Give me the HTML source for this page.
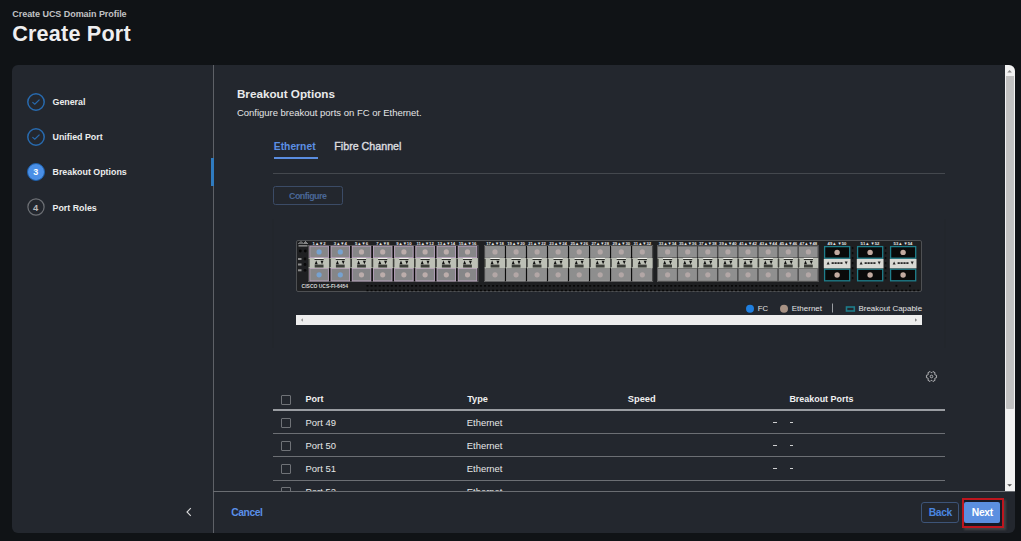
<!DOCTYPE html>
<html><head><meta charset="utf-8"><style>
html,body{margin:0;padding:0;width:1021px;height:541px;overflow:hidden;background:#101316;font-family:"Liberation Sans", sans-serif}
.t{position:absolute;white-space:nowrap}
.r{position:absolute}
</style></head><body>
<div class="t" style="left:12.30px;top:9.88px;font-size:9px;line-height:9px;font-weight:700;color:#c2c3c5;letter-spacing:-0.05px">Create UCS Domain Profile</div><div class="t" style="left:12.20px;top:22.82px;font-size:21.6px;line-height:21.6px;font-weight:700;color:#eeeeef;letter-spacing:0.2px">Create Port</div><div class="r" style="left:12px;top:65px;width:1003px;height:468px;background:#23272e;border-radius:6px"></div><div class="r" style="left:213px;top:65px;width:1px;height:468px;background:#5e6167"></div><div class="r" style="left:211px;top:158px;width:3px;height:28px;background:#2f7bc0"></div><svg class="r" style="left:26px;top:91.5px" width="20" height="20" viewBox="0 0 20 20"><circle cx="10" cy="10" r="8.2" fill="none" stroke="#286aae" stroke-width="1.5"/><path d="M6.4 10.1 L8.8 12.2 L13.5 7.6" fill="none" stroke="#286aae" stroke-width="1.2"/></svg><div class="t" style="left:52.50px;top:98.01px;font-size:8.85px;line-height:8.85px;font-weight:700;color:#eceded;">General</div><svg class="r" style="left:26px;top:126.8px" width="20" height="20" viewBox="0 0 20 20"><circle cx="10" cy="10" r="8.2" fill="none" stroke="#286aae" stroke-width="1.5"/><path d="M6.4 10.1 L8.8 12.2 L13.5 7.6" fill="none" stroke="#286aae" stroke-width="1.2"/></svg><div class="t" style="left:52.50px;top:133.31px;font-size:8.85px;line-height:8.85px;font-weight:700;color:#eceded;">Unified Port</div><svg class="r" style="left:26px;top:161.8px" width="20" height="20" viewBox="0 0 20 20"><circle cx="10" cy="10" r="8.5" fill="#4a8fe6" stroke="#1d5ea8" stroke-width="1"/></svg><div class="t" style="left:33.20px;top:168.18px;font-size:9px;line-height:9px;font-weight:700;color:#ffffff;">3</div><div class="t" style="left:52.50px;top:168.31px;font-size:8.85px;line-height:8.85px;font-weight:700;color:#eceded;">Breakout Options</div><svg class="r" style="left:26px;top:197.3px" width="20" height="20" viewBox="0 0 20 20"><circle cx="10" cy="10" r="8.1" fill="none" stroke="#6d7075" stroke-width="1.2"/></svg><div class="t" style="left:33.00px;top:203.14px;font-size:9.4px;line-height:9.4px;font-weight:700;color:#b9babc;">4</div><div class="t" style="left:52.50px;top:203.81px;font-size:8.85px;line-height:8.85px;font-weight:700;color:#eceded;">Port Roles</div><svg class="r" style="left:184px;top:506px" width="10" height="12" viewBox="0 0 10 12"><path d="M6.8 2.2 L3 6 L6.8 9.8" fill="none" stroke="#d8d9da" stroke-width="1.1"/></svg><div class="t" style="left:236.90px;top:87.70px;font-size:11.7px;line-height:11.7px;font-weight:700;color:#e9eaeb;">Breakout Options</div><div class="t" style="left:236.90px;top:108.38px;font-size:9.48px;line-height:9.48px;font-weight:400;color:#e4e5e6;">Configure breakout ports on FC or Ethernet.</div><div class="t" style="left:273.80px;top:142.48px;font-size:10.3px;line-height:10.3px;font-weight:700;color:#5c8fe4;">Ethernet</div><div class="r" style="left:273.5px;top:157px;width:44px;height:2px;background:#5a8de0"></div><div class="t" style="left:334.30px;top:141.34px;font-size:10.7px;line-height:10.7px;font-weight:400;color:#dedfe0;-webkit-text-stroke:0.35px #dedfe0">Fibre Channel</div><div class="r" style="left:273px;top:173px;width:672px;height:1px;background:#44484e"></div><div class="r" style="left:273px;top:186px;width:70px;height:19px;box-sizing:border-box;border:1px solid #3b4b66;border-radius:2.5px"></div><div class="t" style="left:289.00px;top:191.77px;font-size:8.9px;line-height:8.9px;font-weight:700;color:#4a6797;letter-spacing:-0.5px">Configure</div><svg class="r" style="left:924.8px;top:369.7px" width="13" height="13" viewBox="0 0 13 13"><g fill="none" stroke="#b4b5b7" stroke-width="0.95" stroke-linejoin="round"><path d="M10.06 4.91 L11.55 5.26 L11.55 7.74 L10.06 8.09 L9.66 8.79 L10.10 10.26 L7.96 11.49 L6.90 10.38 L6.10 10.38 L5.04 11.49 L2.90 10.26 L3.34 8.79 L2.94 8.09 L1.45 7.74 L1.45 5.26 L2.94 4.91 L3.34 4.21 L2.90 2.74 L5.04 1.51 L6.10 2.62 L6.90 2.62 L7.96 1.51 L10.10 2.74 L9.66 4.21 Z"/><circle cx="6.5" cy="6.5" r="1.3"/></g></svg><div class="r" style="left:281px;top:395px;width:10px;height:10px;box-sizing:border-box;border:1px solid #6f7277;border-radius:1px"></div><div class="t" style="left:305.50px;top:394.88px;font-size:9.0px;line-height:9.0px;font-weight:700;color:#f0f0f1;">Port</div><div class="t" style="left:467.20px;top:394.71px;font-size:9.2px;line-height:9.2px;font-weight:700;color:#f0f0f1;">Type</div><div class="t" style="left:627.80px;top:394.63px;font-size:9.3px;line-height:9.3px;font-weight:700;color:#f0f0f1;">Speed</div><div class="t" style="left:789.40px;top:394.94px;font-size:8.93px;line-height:8.93px;font-weight:700;color:#f0f0f1;">Breakout Ports</div><div class="r" style="left:273px;top:409px;width:672px;height:2px;background:#9a9da2"></div><div class="r" style="left:213px;top:65px;width:791px;height:426px;overflow:hidden"><div class="r" style="left:68px;top:353px;width:10px;height:10px;box-sizing:border-box;border:1px solid #6f7277;border-radius:1px"></div><div class="t" style="left:92.50px;top:352.70px;font-size:9.45px;line-height:9.45px;font-weight:400;color:#e6e7e8;">Port 49</div><div class="t" style="left:253.80px;top:352.73px;font-size:9.42px;line-height:9.42px;font-weight:400;color:#e6e7e8;">Ethernet</div><div class="r" style="left:560.4px;top:357px;width:3.2px;height:1.2px;background:#cfd0d1"></div><div class="r" style="left:576.9px;top:357px;width:3.2px;height:1.2px;background:#cfd0d1"></div><div class="r" style="left:60px;top:368px;width:672px;height:1px;background:#6c6f74"></div><div class="r" style="left:68px;top:376px;width:10px;height:10px;box-sizing:border-box;border:1px solid #6f7277;border-radius:1px"></div><div class="t" style="left:92.50px;top:375.90px;font-size:9.45px;line-height:9.45px;font-weight:400;color:#e6e7e8;">Port 50</div><div class="t" style="left:253.80px;top:375.93px;font-size:9.42px;line-height:9.42px;font-weight:400;color:#e6e7e8;">Ethernet</div><div class="r" style="left:560.4px;top:380px;width:3.2px;height:1.2px;background:#cfd0d1"></div><div class="r" style="left:576.9px;top:380px;width:3.2px;height:1.2px;background:#cfd0d1"></div><div class="r" style="left:60px;top:391px;width:672px;height:1px;background:#6c6f74"></div><div class="r" style="left:68px;top:399px;width:10px;height:10px;box-sizing:border-box;border:1px solid #6f7277;border-radius:1px"></div><div class="t" style="left:92.50px;top:399.20px;font-size:9.45px;line-height:9.45px;font-weight:400;color:#e6e7e8;">Port 51</div><div class="t" style="left:253.80px;top:399.23px;font-size:9.42px;line-height:9.42px;font-weight:400;color:#e6e7e8;">Ethernet</div><div class="r" style="left:560.4px;top:403px;width:3.2px;height:1.2px;background:#cfd0d1"></div><div class="r" style="left:576.9px;top:403px;width:3.2px;height:1.2px;background:#cfd0d1"></div><div class="r" style="left:60px;top:415px;width:672px;height:1px;background:#6c6f74"></div><div class="r" style="left:68px;top:422px;width:10px;height:10px;box-sizing:border-box;border:1px solid #6f7277;border-radius:1px"></div><div class="t" style="left:92.50px;top:422.10px;font-size:9.45px;line-height:9.45px;font-weight:400;color:#e6e7e8;">Port 52</div><div class="t" style="left:253.80px;top:422.13px;font-size:9.42px;line-height:9.42px;font-weight:400;color:#e6e7e8;">Ethernet</div><div class="r" style="left:560.4px;top:426px;width:3.2px;height:1.2px;background:#cfd0d1"></div><div class="r" style="left:576.9px;top:426px;width:3.2px;height:1.2px;background:#cfd0d1"></div><div class="r" style="left:60px;top:438px;width:672px;height:1px;background:#6c6f74"></div></div><div class="r" style="left:213px;top:491px;width:802px;height:1px;background:#6a6d72"></div><div class="t" style="left:231.30px;top:507.58px;font-size:10.3px;line-height:10.3px;font-weight:700;color:#5b8fe8;letter-spacing:-0.42px">Cancel</div><div class="r" style="left:921px;top:502px;width:38px;height:21px;box-sizing:border-box;border:1px solid #3d5478;border-radius:3px"></div><div class="t" style="left:928.80px;top:507.58px;font-size:10.3px;line-height:10.3px;font-weight:700;color:#4a86e0;letter-spacing:-0.4px">Back</div><div class="r" style="left:962px;top:498px;width:42px;height:30px;box-sizing:border-box;border:2px solid #bd161e;background:#161a26;box-shadow:1.5px 1.5px 2px rgba(70,70,72,0.9)"></div><div class="r" style="left:964px;top:502px;width:36px;height:21px;background:#5b8fe0;border-radius:2px"></div><div class="t" style="left:971.80px;top:507.58px;font-size:10.3px;line-height:10.3px;font-weight:700;color:#ffffff;letter-spacing:-0.3px">Next</div><div class="r" style="left:1004.6px;top:65px;width:10.4px;height:426px;background:#f1f1f1;border-top-right-radius:6px"></div><div class="r" style="left:1006px;top:76px;width:7.6px;height:332.6px;background:#c1c1c1;border-radius:0 0 1px 1px"></div><svg class="r" style="left:1004px;top:65px" width="11" height="426" viewBox="0 0 11 426"><path d="M3.3 7.4 L5.6 5.1 L7.9 7.4 Z" fill="#8a8a8a"/><path d="M3.2 419.2 L5.6 421.5 L8 419.2 Z" fill="#4a4a4a"/></svg><div class="r" style="left:272px;top:219px;width:2px;height:129px;background:#22262c"></div><div class="r" style="left:944px;top:219px;width:2px;height:129px;background:#22262c"></div><svg class="r" style="left:290px;top:236px" width="640" height="60" viewBox="290 236 640 60"><rect x="296.5" y="240.5" width="625" height="51" rx="1.5" fill="#1f2022" stroke="#4e5053" stroke-width="1"/><rect x="298.5" y="243" width="0.6" height="1" fill="#c8c8c8"/><rect x="299.6" y="242" width="0.6" height="2" fill="#c8c8c8"/><rect x="300.7" y="241" width="0.6" height="3" fill="#c8c8c8"/><rect x="301.8" y="242" width="0.6" height="2" fill="#c8c8c8"/><rect x="302.9" y="243" width="0.6" height="1" fill="#c8c8c8"/><rect x="304.0" y="242" width="0.6" height="2" fill="#c8c8c8"/><rect x="305.1" y="241" width="0.6" height="3" fill="#c8c8c8"/><rect x="306.2" y="242" width="0.6" height="2" fill="#c8c8c8"/><rect x="307.3" y="243" width="0.6" height="1" fill="#c8c8c8"/><rect x="298.5" y="245.2" width="9" height="1.3" fill="#9a9a9a"/><circle cx="300.3" cy="251" r="1.4" fill="#050505"/><circle cx="305.3" cy="251" r="1.4" fill="#050505"/><rect x="298" y="258" width="3.5" height="2" fill="#8c8c8c"/><circle cx="305" cy="259" r="1.4" fill="#0a0a0a"/><rect x="298" y="263.5" width="3.5" height="2" fill="#8c8c8c"/><circle cx="305" cy="264.5" r="1.4" fill="#0a0a0a"/><rect x="298" y="269.3" width="3.5" height="2" fill="#8c8c8c"/><circle cx="305" cy="270.3" r="1.4" fill="#0a0a0a"/><text x="301.6" y="288.3" font-family="Liberation Sans" font-size="5.2" font-weight="700" fill="#d8d8d8" textLength="46.5" lengthAdjust="spacingAndGlyphs">CISCO UCS-FI-6454</text><rect x="366.5" y="285.0" width="2" height="1.6" fill="#070707"/><rect x="366.5" y="289.7" width="2" height="1.6" fill="#070707"/><rect x="370.6" y="285.0" width="2" height="1.6" fill="#070707"/><rect x="370.6" y="289.7" width="2" height="1.6" fill="#070707"/><rect x="374.6" y="285.0" width="2" height="1.6" fill="#070707"/><rect x="374.6" y="289.7" width="2" height="1.6" fill="#070707"/><rect x="378.7" y="285.0" width="2" height="1.6" fill="#070707"/><rect x="378.7" y="289.7" width="2" height="1.6" fill="#070707"/><rect x="382.7" y="285.0" width="2" height="1.6" fill="#070707"/><rect x="382.7" y="289.7" width="2" height="1.6" fill="#070707"/><rect x="386.8" y="285.0" width="2" height="1.6" fill="#070707"/><rect x="386.8" y="289.7" width="2" height="1.6" fill="#070707"/><rect x="390.8" y="285.0" width="2" height="1.6" fill="#070707"/><rect x="390.8" y="289.7" width="2" height="1.6" fill="#070707"/><rect x="394.9" y="285.0" width="2" height="1.6" fill="#070707"/><rect x="394.9" y="289.7" width="2" height="1.6" fill="#070707"/><rect x="398.9" y="285.0" width="2" height="1.6" fill="#070707"/><rect x="398.9" y="289.7" width="2" height="1.6" fill="#070707"/><rect x="403.0" y="285.0" width="2" height="1.6" fill="#070707"/><rect x="403.0" y="289.7" width="2" height="1.6" fill="#070707"/><rect x="407.0" y="285.0" width="2" height="1.6" fill="#070707"/><rect x="407.0" y="289.7" width="2" height="1.6" fill="#070707"/><rect x="411.1" y="285.0" width="2" height="1.6" fill="#070707"/><rect x="411.1" y="289.7" width="2" height="1.6" fill="#070707"/><rect x="415.1" y="285.0" width="2" height="1.6" fill="#070707"/><rect x="415.1" y="289.7" width="2" height="1.6" fill="#070707"/><rect x="419.2" y="285.0" width="2" height="1.6" fill="#070707"/><rect x="419.2" y="289.7" width="2" height="1.6" fill="#070707"/><rect x="423.2" y="285.0" width="2" height="1.6" fill="#070707"/><rect x="423.2" y="289.7" width="2" height="1.6" fill="#070707"/><rect x="427.3" y="285.0" width="2" height="1.6" fill="#070707"/><rect x="427.3" y="289.7" width="2" height="1.6" fill="#070707"/><rect x="431.3" y="285.0" width="2" height="1.6" fill="#070707"/><rect x="431.3" y="289.7" width="2" height="1.6" fill="#070707"/><rect x="435.4" y="285.0" width="2" height="1.6" fill="#070707"/><rect x="435.4" y="289.7" width="2" height="1.6" fill="#070707"/><rect x="439.4" y="285.0" width="2" height="1.6" fill="#070707"/><rect x="439.4" y="289.7" width="2" height="1.6" fill="#070707"/><rect x="443.5" y="285.0" width="2" height="1.6" fill="#070707"/><rect x="443.5" y="289.7" width="2" height="1.6" fill="#070707"/><rect x="447.5" y="285.0" width="2" height="1.6" fill="#070707"/><rect x="447.5" y="289.7" width="2" height="1.6" fill="#070707"/><rect x="451.6" y="285.0" width="2" height="1.6" fill="#070707"/><rect x="451.6" y="289.7" width="2" height="1.6" fill="#070707"/><rect x="455.6" y="285.0" width="2" height="1.6" fill="#070707"/><rect x="455.6" y="289.7" width="2" height="1.6" fill="#070707"/><rect x="459.7" y="285.0" width="2" height="1.6" fill="#070707"/><rect x="459.7" y="289.7" width="2" height="1.6" fill="#070707"/><rect x="463.7" y="285.0" width="2" height="1.6" fill="#070707"/><rect x="463.7" y="289.7" width="2" height="1.6" fill="#070707"/><rect x="467.8" y="285.0" width="2" height="1.6" fill="#070707"/><rect x="467.8" y="289.7" width="2" height="1.6" fill="#070707"/><rect x="471.8" y="285.0" width="2" height="1.6" fill="#070707"/><rect x="471.8" y="289.7" width="2" height="1.6" fill="#070707"/><rect x="475.9" y="285.0" width="2" height="1.6" fill="#070707"/><rect x="475.9" y="289.7" width="2" height="1.6" fill="#070707"/><rect x="479.9" y="285.0" width="2" height="1.6" fill="#070707"/><rect x="479.9" y="289.7" width="2" height="1.6" fill="#070707"/><rect x="484.0" y="285.0" width="2" height="1.6" fill="#070707"/><rect x="484.0" y="289.7" width="2" height="1.6" fill="#070707"/><rect x="488.0" y="285.0" width="2" height="1.6" fill="#070707"/><rect x="488.0" y="289.7" width="2" height="1.6" fill="#070707"/><rect x="492.1" y="285.0" width="2" height="1.6" fill="#070707"/><rect x="492.1" y="289.7" width="2" height="1.6" fill="#070707"/><rect x="496.1" y="285.0" width="2" height="1.6" fill="#070707"/><rect x="496.1" y="289.7" width="2" height="1.6" fill="#070707"/><rect x="500.2" y="285.0" width="2" height="1.6" fill="#070707"/><rect x="500.2" y="289.7" width="2" height="1.6" fill="#070707"/><rect x="504.2" y="285.0" width="2" height="1.6" fill="#070707"/><rect x="504.2" y="289.7" width="2" height="1.6" fill="#070707"/><rect x="508.3" y="285.0" width="2" height="1.6" fill="#070707"/><rect x="508.3" y="289.7" width="2" height="1.6" fill="#070707"/><rect x="512.3" y="285.0" width="2" height="1.6" fill="#070707"/><rect x="512.3" y="289.7" width="2" height="1.6" fill="#070707"/><rect x="516.4" y="285.0" width="2" height="1.6" fill="#070707"/><rect x="516.4" y="289.7" width="2" height="1.6" fill="#070707"/><rect x="520.4" y="285.0" width="2" height="1.6" fill="#070707"/><rect x="520.4" y="289.7" width="2" height="1.6" fill="#070707"/><rect x="524.5" y="285.0" width="2" height="1.6" fill="#070707"/><rect x="524.5" y="289.7" width="2" height="1.6" fill="#070707"/><rect x="528.5" y="285.0" width="2" height="1.6" fill="#070707"/><rect x="528.5" y="289.7" width="2" height="1.6" fill="#070707"/><rect x="532.6" y="285.0" width="2" height="1.6" fill="#070707"/><rect x="532.6" y="289.7" width="2" height="1.6" fill="#070707"/><rect x="536.6" y="285.0" width="2" height="1.6" fill="#070707"/><rect x="536.6" y="289.7" width="2" height="1.6" fill="#070707"/><rect x="540.7" y="285.0" width="2" height="1.6" fill="#070707"/><rect x="540.7" y="289.7" width="2" height="1.6" fill="#070707"/><rect x="544.7" y="285.0" width="2" height="1.6" fill="#070707"/><rect x="544.7" y="289.7" width="2" height="1.6" fill="#070707"/><rect x="548.8" y="285.0" width="2" height="1.6" fill="#070707"/><rect x="548.8" y="289.7" width="2" height="1.6" fill="#070707"/><rect x="552.8" y="285.0" width="2" height="1.6" fill="#070707"/><rect x="552.8" y="289.7" width="2" height="1.6" fill="#070707"/><rect x="556.8" y="285.0" width="2" height="1.6" fill="#070707"/><rect x="556.8" y="289.7" width="2" height="1.6" fill="#070707"/><rect x="560.9" y="285.0" width="2" height="1.6" fill="#070707"/><rect x="560.9" y="289.7" width="2" height="1.6" fill="#070707"/><rect x="564.9" y="285.0" width="2" height="1.6" fill="#070707"/><rect x="564.9" y="289.7" width="2" height="1.6" fill="#070707"/><rect x="569.0" y="285.0" width="2" height="1.6" fill="#070707"/><rect x="569.0" y="289.7" width="2" height="1.6" fill="#070707"/><rect x="573.0" y="285.0" width="2" height="1.6" fill="#070707"/><rect x="573.0" y="289.7" width="2" height="1.6" fill="#070707"/><rect x="577.1" y="285.0" width="2" height="1.6" fill="#070707"/><rect x="577.1" y="289.7" width="2" height="1.6" fill="#070707"/><rect x="581.1" y="285.0" width="2" height="1.6" fill="#070707"/><rect x="581.1" y="289.7" width="2" height="1.6" fill="#070707"/><rect x="585.2" y="285.0" width="2" height="1.6" fill="#070707"/><rect x="585.2" y="289.7" width="2" height="1.6" fill="#070707"/><rect x="589.2" y="285.0" width="2" height="1.6" fill="#070707"/><rect x="589.2" y="289.7" width="2" height="1.6" fill="#070707"/><rect x="593.3" y="285.0" width="2" height="1.6" fill="#070707"/><rect x="593.3" y="289.7" width="2" height="1.6" fill="#070707"/><rect x="597.3" y="285.0" width="2" height="1.6" fill="#070707"/><rect x="597.3" y="289.7" width="2" height="1.6" fill="#070707"/><rect x="601.4" y="285.0" width="2" height="1.6" fill="#070707"/><rect x="601.4" y="289.7" width="2" height="1.6" fill="#070707"/><rect x="605.4" y="285.0" width="2" height="1.6" fill="#070707"/><rect x="605.4" y="289.7" width="2" height="1.6" fill="#070707"/><rect x="609.5" y="285.0" width="2" height="1.6" fill="#070707"/><rect x="609.5" y="289.7" width="2" height="1.6" fill="#070707"/><rect x="613.5" y="285.0" width="2" height="1.6" fill="#070707"/><rect x="613.5" y="289.7" width="2" height="1.6" fill="#070707"/><rect x="617.6" y="285.0" width="2" height="1.6" fill="#070707"/><rect x="617.6" y="289.7" width="2" height="1.6" fill="#070707"/><rect x="621.6" y="285.0" width="2" height="1.6" fill="#070707"/><rect x="621.6" y="289.7" width="2" height="1.6" fill="#070707"/><rect x="625.7" y="285.0" width="2" height="1.6" fill="#070707"/><rect x="625.7" y="289.7" width="2" height="1.6" fill="#070707"/><rect x="629.7" y="285.0" width="2" height="1.6" fill="#070707"/><rect x="629.7" y="289.7" width="2" height="1.6" fill="#070707"/><rect x="633.8" y="285.0" width="2" height="1.6" fill="#070707"/><rect x="633.8" y="289.7" width="2" height="1.6" fill="#070707"/><rect x="637.8" y="285.0" width="2" height="1.6" fill="#070707"/><rect x="637.8" y="289.7" width="2" height="1.6" fill="#070707"/><rect x="641.9" y="285.0" width="2" height="1.6" fill="#070707"/><rect x="641.9" y="289.7" width="2" height="1.6" fill="#070707"/><rect x="645.9" y="285.0" width="2" height="1.6" fill="#070707"/><rect x="645.9" y="289.7" width="2" height="1.6" fill="#070707"/><rect x="650.0" y="285.0" width="2" height="1.6" fill="#070707"/><rect x="650.0" y="289.7" width="2" height="1.6" fill="#070707"/><rect x="654.0" y="285.0" width="2" height="1.6" fill="#070707"/><rect x="654.0" y="289.7" width="2" height="1.6" fill="#070707"/><rect x="658.1" y="285.0" width="2" height="1.6" fill="#070707"/><rect x="658.1" y="289.7" width="2" height="1.6" fill="#070707"/><rect x="662.1" y="285.0" width="2" height="1.6" fill="#070707"/><rect x="662.1" y="289.7" width="2" height="1.6" fill="#070707"/><rect x="666.2" y="285.0" width="2" height="1.6" fill="#070707"/><rect x="666.2" y="289.7" width="2" height="1.6" fill="#070707"/><rect x="670.2" y="285.0" width="2" height="1.6" fill="#070707"/><rect x="670.2" y="289.7" width="2" height="1.6" fill="#070707"/><rect x="674.3" y="285.0" width="2" height="1.6" fill="#070707"/><rect x="674.3" y="289.7" width="2" height="1.6" fill="#070707"/><rect x="678.3" y="285.0" width="2" height="1.6" fill="#070707"/><rect x="678.3" y="289.7" width="2" height="1.6" fill="#070707"/><rect x="682.4" y="285.0" width="2" height="1.6" fill="#070707"/><rect x="682.4" y="289.7" width="2" height="1.6" fill="#070707"/><rect x="686.4" y="285.0" width="2" height="1.6" fill="#070707"/><rect x="686.4" y="289.7" width="2" height="1.6" fill="#070707"/><rect x="690.5" y="285.0" width="2" height="1.6" fill="#070707"/><rect x="690.5" y="289.7" width="2" height="1.6" fill="#070707"/><rect x="694.5" y="285.0" width="2" height="1.6" fill="#070707"/><rect x="694.5" y="289.7" width="2" height="1.6" fill="#070707"/><rect x="698.6" y="285.0" width="2" height="1.6" fill="#070707"/><rect x="698.6" y="289.7" width="2" height="1.6" fill="#070707"/><rect x="702.6" y="285.0" width="2" height="1.6" fill="#070707"/><rect x="702.6" y="289.7" width="2" height="1.6" fill="#070707"/><rect x="706.7" y="285.0" width="2" height="1.6" fill="#070707"/><rect x="706.7" y="289.7" width="2" height="1.6" fill="#070707"/><rect x="710.7" y="285.0" width="2" height="1.6" fill="#070707"/><rect x="710.7" y="289.7" width="2" height="1.6" fill="#070707"/><rect x="714.8" y="285.0" width="2" height="1.6" fill="#070707"/><rect x="714.8" y="289.7" width="2" height="1.6" fill="#070707"/><rect x="718.8" y="285.0" width="2" height="1.6" fill="#070707"/><rect x="718.8" y="289.7" width="2" height="1.6" fill="#070707"/><rect x="722.9" y="285.0" width="2" height="1.6" fill="#070707"/><rect x="722.9" y="289.7" width="2" height="1.6" fill="#070707"/><rect x="726.9" y="285.0" width="2" height="1.6" fill="#070707"/><rect x="726.9" y="289.7" width="2" height="1.6" fill="#070707"/><rect x="731.0" y="285.0" width="2" height="1.6" fill="#070707"/><rect x="731.0" y="289.7" width="2" height="1.6" fill="#070707"/><rect x="735.0" y="285.0" width="2" height="1.6" fill="#070707"/><rect x="735.0" y="289.7" width="2" height="1.6" fill="#070707"/><rect x="739.1" y="285.0" width="2" height="1.6" fill="#070707"/><rect x="739.1" y="289.7" width="2" height="1.6" fill="#070707"/><rect x="743.1" y="285.0" width="2" height="1.6" fill="#070707"/><rect x="743.1" y="289.7" width="2" height="1.6" fill="#070707"/><rect x="747.2" y="285.0" width="2" height="1.6" fill="#070707"/><rect x="747.2" y="289.7" width="2" height="1.6" fill="#070707"/><rect x="751.2" y="285.0" width="2" height="1.6" fill="#070707"/><rect x="751.2" y="289.7" width="2" height="1.6" fill="#070707"/><rect x="755.3" y="285.0" width="2" height="1.6" fill="#070707"/><rect x="755.3" y="289.7" width="2" height="1.6" fill="#070707"/><rect x="759.3" y="285.0" width="2" height="1.6" fill="#070707"/><rect x="759.3" y="289.7" width="2" height="1.6" fill="#070707"/><rect x="763.4" y="285.0" width="2" height="1.6" fill="#070707"/><rect x="763.4" y="289.7" width="2" height="1.6" fill="#070707"/><rect x="767.4" y="285.0" width="2" height="1.6" fill="#070707"/><rect x="767.4" y="289.7" width="2" height="1.6" fill="#070707"/><rect x="771.5" y="285.0" width="2" height="1.6" fill="#070707"/><rect x="771.5" y="289.7" width="2" height="1.6" fill="#070707"/><rect x="775.5" y="285.0" width="2" height="1.6" fill="#070707"/><rect x="775.5" y="289.7" width="2" height="1.6" fill="#070707"/><rect x="779.6" y="285.0" width="2" height="1.6" fill="#070707"/><rect x="779.6" y="289.7" width="2" height="1.6" fill="#070707"/><rect x="783.6" y="285.0" width="2" height="1.6" fill="#070707"/><rect x="783.6" y="289.7" width="2" height="1.6" fill="#070707"/><rect x="787.7" y="285.0" width="2" height="1.6" fill="#070707"/><rect x="787.7" y="289.7" width="2" height="1.6" fill="#070707"/><rect x="791.7" y="285.0" width="2" height="1.6" fill="#070707"/><rect x="791.7" y="289.7" width="2" height="1.6" fill="#070707"/><rect x="795.8" y="285.0" width="2" height="1.6" fill="#070707"/><rect x="795.8" y="289.7" width="2" height="1.6" fill="#070707"/><rect x="799.8" y="285.0" width="2" height="1.6" fill="#070707"/><rect x="799.8" y="289.7" width="2" height="1.6" fill="#070707"/><rect x="803.9" y="285.0" width="2" height="1.6" fill="#070707"/><rect x="803.9" y="289.7" width="2" height="1.6" fill="#070707"/><rect x="807.9" y="285.0" width="2" height="1.6" fill="#070707"/><rect x="807.9" y="289.7" width="2" height="1.6" fill="#070707"/><rect x="812.0" y="285.0" width="2" height="1.6" fill="#070707"/><rect x="812.0" y="289.7" width="2" height="1.6" fill="#070707"/><rect x="816.0" y="285.0" width="2" height="1.6" fill="#070707"/><rect x="816.0" y="289.7" width="2" height="1.6" fill="#070707"/><rect x="820.1" y="289.7" width="2" height="1.6" fill="#070707"/><rect x="824.1" y="289.7" width="2" height="1.6" fill="#070707"/><rect x="828.2" y="289.7" width="2" height="1.6" fill="#070707"/><rect x="832.2" y="289.7" width="2" height="1.6" fill="#070707"/><rect x="836.3" y="289.7" width="2" height="1.6" fill="#070707"/><rect x="840.3" y="289.7" width="2" height="1.6" fill="#070707"/><rect x="844.4" y="289.7" width="2" height="1.6" fill="#070707"/><rect x="848.4" y="289.7" width="2" height="1.6" fill="#070707"/><rect x="852.5" y="289.7" width="2" height="1.6" fill="#070707"/><rect x="856.5" y="289.7" width="2" height="1.6" fill="#070707"/><rect x="860.6" y="289.7" width="2" height="1.6" fill="#070707"/><rect x="864.6" y="289.7" width="2" height="1.6" fill="#070707"/><rect x="868.7" y="289.7" width="2" height="1.6" fill="#070707"/><rect x="872.7" y="289.7" width="2" height="1.6" fill="#070707"/><rect x="876.8" y="289.7" width="2" height="1.6" fill="#070707"/><rect x="880.8" y="289.7" width="2" height="1.6" fill="#070707"/><rect x="884.9" y="289.7" width="2" height="1.6" fill="#070707"/><rect x="888.9" y="289.7" width="2" height="1.6" fill="#070707"/><rect x="893.0" y="289.7" width="2" height="1.6" fill="#070707"/><rect x="897.0" y="289.7" width="2" height="1.6" fill="#070707"/><rect x="901.1" y="289.7" width="2" height="1.6" fill="#070707"/><rect x="905.1" y="289.7" width="2" height="1.6" fill="#070707"/><rect x="909.2" y="289.7" width="2" height="1.6" fill="#070707"/><rect x="913.2" y="289.7" width="2" height="1.6" fill="#070707"/><rect x="917.3" y="289.7" width="2" height="1.6" fill="#070707"/><rect x="308.5" y="245.3" width="169.6" height="36.4" fill="#0c0c0c" stroke="#6f6f6f" stroke-width="0.6"/><text x="319.1" y="245.2" font-family="Liberation Sans" font-weight="700" font-size="4.2" fill="#e8e8e8" text-anchor="middle">1▲▼2</text><rect x="309.8" y="246.2" width="18.6" height="11.4" fill="#868688" stroke="#bfa8c3" stroke-width="0.9"/><circle cx="319.1" cy="251.9" r="2.6" fill="#76a2d0"/><rect x="309.8" y="268.5" width="18.6" height="12.5" fill="#868688" stroke="#bfa8c3" stroke-width="0.9"/><circle cx="319.1" cy="274.8" r="2.6" fill="#76a2d0"/><rect x="308.7" y="258.0" width="20.8" height="10.2" fill="#bdc0b6"/><rect x="314.5" y="257.9" width="9.2" height="1.1" fill="#f0f0ea"/><rect x="314.5" y="259.0" width="9.2" height="1.0" fill="#2c2e2a"/><rect x="314.7" y="264.6" width="8.8" height="2.9" fill="#3c3e39"/><path d="M314.7 264.2 L316.2 260.6 L317.7 264.2 Z" fill="#111"/><path d="M320.5 260.8 L322.0 264.2 L323.5 260.8 Z" fill="#111"/><rect x="308.0" y="258.8" width="1.6" height="8.4" fill="#3e3f3b"/><text x="340.3" y="245.2" font-family="Liberation Sans" font-weight="700" font-size="4.2" fill="#e8e8e8" text-anchor="middle">3▲▼4</text><rect x="331.0" y="246.2" width="18.6" height="11.4" fill="#868688" stroke="#bfa8c3" stroke-width="0.9"/><circle cx="340.3" cy="251.9" r="2.6" fill="#76a2d0"/><rect x="331.0" y="268.5" width="18.6" height="12.5" fill="#868688" stroke="#bfa8c3" stroke-width="0.9"/><circle cx="340.3" cy="274.8" r="2.6" fill="#76a2d0"/><rect x="329.9" y="258.0" width="20.8" height="10.2" fill="#bdc0b6"/><rect x="335.7" y="257.9" width="9.2" height="1.1" fill="#f0f0ea"/><rect x="335.7" y="259.0" width="9.2" height="1.0" fill="#2c2e2a"/><rect x="335.9" y="264.6" width="8.8" height="2.9" fill="#3c3e39"/><path d="M335.9 264.2 L337.4 260.6 L338.9 264.2 Z" fill="#111"/><path d="M341.7 260.8 L343.2 264.2 L344.7 260.8 Z" fill="#111"/><rect x="329.2" y="258.8" width="1.6" height="8.4" fill="#3e3f3b"/><text x="361.5" y="245.2" font-family="Liberation Sans" font-weight="700" font-size="4.2" fill="#e8e8e8" text-anchor="middle">5▲▼6</text><rect x="352.2" y="246.2" width="18.6" height="11.4" fill="#868688" stroke="#bfa8c3" stroke-width="0.9"/><circle cx="361.5" cy="251.9" r="2.6" fill="#bcadab"/><rect x="352.2" y="268.5" width="18.6" height="12.5" fill="#868688" stroke="#bfa8c3" stroke-width="0.9"/><circle cx="361.5" cy="274.8" r="2.6" fill="#bcadab"/><rect x="351.1" y="258.0" width="20.8" height="10.2" fill="#bdc0b6"/><rect x="356.9" y="257.9" width="9.2" height="1.1" fill="#f0f0ea"/><rect x="356.9" y="259.0" width="9.2" height="1.0" fill="#2c2e2a"/><rect x="357.1" y="264.6" width="8.8" height="2.9" fill="#3c3e39"/><path d="M357.1 264.2 L358.6 260.6 L360.1 264.2 Z" fill="#111"/><path d="M362.9 260.8 L364.4 264.2 L365.9 260.8 Z" fill="#111"/><rect x="350.4" y="258.8" width="1.6" height="8.4" fill="#3e3f3b"/><text x="382.7" y="245.2" font-family="Liberation Sans" font-weight="700" font-size="4.2" fill="#e8e8e8" text-anchor="middle">7▲▼8</text><rect x="373.4" y="246.2" width="18.6" height="11.4" fill="#868688" stroke="#bfa8c3" stroke-width="0.9"/><circle cx="382.7" cy="251.9" r="2.6" fill="#bcadab"/><rect x="373.4" y="268.5" width="18.6" height="12.5" fill="#868688" stroke="#bfa8c3" stroke-width="0.9"/><circle cx="382.7" cy="274.8" r="2.6" fill="#bcadab"/><rect x="372.3" y="258.0" width="20.8" height="10.2" fill="#bdc0b6"/><rect x="378.1" y="257.9" width="9.2" height="1.1" fill="#f0f0ea"/><rect x="378.1" y="259.0" width="9.2" height="1.0" fill="#2c2e2a"/><rect x="378.3" y="264.6" width="8.8" height="2.9" fill="#3c3e39"/><path d="M378.3 264.2 L379.8 260.6 L381.3 264.2 Z" fill="#111"/><path d="M384.1 260.8 L385.6 264.2 L387.1 260.8 Z" fill="#111"/><rect x="371.6" y="258.8" width="1.6" height="8.4" fill="#3e3f3b"/><text x="403.9" y="245.2" font-family="Liberation Sans" font-weight="700" font-size="4.2" fill="#e8e8e8" text-anchor="middle">9▲▼10</text><rect x="394.6" y="246.2" width="18.6" height="11.4" fill="#868688" stroke="#bfa8c3" stroke-width="0.9"/><circle cx="403.9" cy="251.9" r="2.6" fill="#bcadab"/><rect x="394.6" y="268.5" width="18.6" height="12.5" fill="#868688" stroke="#bfa8c3" stroke-width="0.9"/><circle cx="403.9" cy="274.8" r="2.6" fill="#bcadab"/><rect x="393.5" y="258.0" width="20.8" height="10.2" fill="#bdc0b6"/><rect x="399.3" y="257.9" width="9.2" height="1.1" fill="#f0f0ea"/><rect x="399.3" y="259.0" width="9.2" height="1.0" fill="#2c2e2a"/><rect x="399.5" y="264.6" width="8.8" height="2.9" fill="#3c3e39"/><path d="M399.5 264.2 L401.0 260.6 L402.5 264.2 Z" fill="#111"/><path d="M405.3 260.8 L406.8 264.2 L408.3 260.8 Z" fill="#111"/><rect x="392.8" y="258.8" width="1.6" height="8.4" fill="#3e3f3b"/><text x="425.1" y="245.2" font-family="Liberation Sans" font-weight="700" font-size="4.2" fill="#e8e8e8" text-anchor="middle">11▲▼12</text><rect x="415.8" y="246.2" width="18.6" height="11.4" fill="#868688" stroke="#bfa8c3" stroke-width="0.9"/><circle cx="425.1" cy="251.9" r="2.6" fill="#bcadab"/><rect x="415.8" y="268.5" width="18.6" height="12.5" fill="#868688" stroke="#bfa8c3" stroke-width="0.9"/><circle cx="425.1" cy="274.8" r="2.6" fill="#bcadab"/><rect x="414.7" y="258.0" width="20.8" height="10.2" fill="#bdc0b6"/><rect x="420.5" y="257.9" width="9.2" height="1.1" fill="#f0f0ea"/><rect x="420.5" y="259.0" width="9.2" height="1.0" fill="#2c2e2a"/><rect x="420.7" y="264.6" width="8.8" height="2.9" fill="#3c3e39"/><path d="M420.7 264.2 L422.2 260.6 L423.7 264.2 Z" fill="#111"/><path d="M426.5 260.8 L428.0 264.2 L429.5 260.8 Z" fill="#111"/><rect x="414.0" y="258.8" width="1.6" height="8.4" fill="#3e3f3b"/><text x="446.3" y="245.2" font-family="Liberation Sans" font-weight="700" font-size="4.2" fill="#e8e8e8" text-anchor="middle">13▲▼14</text><rect x="437.0" y="246.2" width="18.6" height="11.4" fill="#868688" stroke="#bfa8c3" stroke-width="0.9"/><circle cx="446.3" cy="251.9" r="2.6" fill="#bcadab"/><rect x="437.0" y="268.5" width="18.6" height="12.5" fill="#868688" stroke="#bfa8c3" stroke-width="0.9"/><circle cx="446.3" cy="274.8" r="2.6" fill="#bcadab"/><rect x="435.9" y="258.0" width="20.8" height="10.2" fill="#bdc0b6"/><rect x="441.7" y="257.9" width="9.2" height="1.1" fill="#f0f0ea"/><rect x="441.7" y="259.0" width="9.2" height="1.0" fill="#2c2e2a"/><rect x="441.9" y="264.6" width="8.8" height="2.9" fill="#3c3e39"/><path d="M441.9 264.2 L443.4 260.6 L444.9 264.2 Z" fill="#111"/><path d="M447.7 260.8 L449.2 264.2 L450.7 260.8 Z" fill="#111"/><rect x="435.2" y="258.8" width="1.6" height="8.4" fill="#3e3f3b"/><text x="467.5" y="245.2" font-family="Liberation Sans" font-weight="700" font-size="4.2" fill="#e8e8e8" text-anchor="middle">15▲▼16</text><rect x="458.2" y="246.2" width="18.6" height="11.4" fill="#868688" stroke="#bfa8c3" stroke-width="0.9"/><circle cx="467.5" cy="251.9" r="2.6" fill="#bcadab"/><rect x="458.2" y="268.5" width="18.6" height="12.5" fill="#868688" stroke="#bfa8c3" stroke-width="0.9"/><circle cx="467.5" cy="274.8" r="2.6" fill="#bcadab"/><rect x="457.1" y="258.0" width="20.8" height="10.2" fill="#bdc0b6"/><rect x="462.9" y="257.9" width="9.2" height="1.1" fill="#f0f0ea"/><rect x="462.9" y="259.0" width="9.2" height="1.0" fill="#2c2e2a"/><rect x="463.1" y="264.6" width="8.8" height="2.9" fill="#3c3e39"/><path d="M463.1 264.2 L464.6 260.6 L466.1 264.2 Z" fill="#111"/><path d="M468.9 260.8 L470.4 264.2 L471.9 260.8 Z" fill="#111"/><rect x="456.4" y="258.8" width="1.6" height="8.4" fill="#3e3f3b"/><rect x="484.5" y="245.3" width="168.3" height="36.4" fill="#0c0c0c" stroke="#6f6f6f" stroke-width="0.6"/><text x="495.0" y="245.2" font-family="Liberation Sans" font-weight="700" font-size="4.2" fill="#e8e8e8" text-anchor="middle">17▲▼18</text><rect x="485.4" y="246.2" width="19.1" height="11.4" fill="#8e8e8e" stroke="#a5a5a5" stroke-width="0.6"/><circle cx="495.0" cy="251.9" r="2.6" fill="#b3a7a6"/><rect x="485.4" y="268.5" width="19.1" height="12.5" fill="#8e8e8e" stroke="#a5a5a5" stroke-width="0.6"/><circle cx="495.0" cy="274.8" r="2.6" fill="#b3a7a6"/><rect x="484.7" y="258.0" width="20.6" height="10.2" fill="#bdc0b6"/><rect x="490.4" y="257.9" width="9.2" height="1.1" fill="#f0f0ea"/><rect x="490.4" y="259.0" width="9.2" height="1.0" fill="#2c2e2a"/><rect x="490.6" y="264.6" width="8.8" height="2.9" fill="#3c3e39"/><path d="M490.6 264.2 L492.1 260.6 L493.6 264.2 Z" fill="#111"/><path d="M496.4 260.8 L497.9 264.2 L499.4 260.8 Z" fill="#111"/><rect x="484.0" y="258.8" width="1.6" height="8.4" fill="#3e3f3b"/><text x="516.1" y="245.2" font-family="Liberation Sans" font-weight="700" font-size="4.2" fill="#e8e8e8" text-anchor="middle">19▲▼20</text><rect x="506.4" y="246.2" width="19.1" height="11.4" fill="#8e8e8e" stroke="#a5a5a5" stroke-width="0.6"/><circle cx="516.1" cy="251.9" r="2.6" fill="#b3a7a6"/><rect x="506.4" y="268.5" width="19.1" height="12.5" fill="#8e8e8e" stroke="#a5a5a5" stroke-width="0.6"/><circle cx="516.1" cy="274.8" r="2.6" fill="#b3a7a6"/><rect x="505.7" y="258.0" width="20.6" height="10.2" fill="#bdc0b6"/><rect x="511.5" y="257.9" width="9.2" height="1.1" fill="#f0f0ea"/><rect x="511.5" y="259.0" width="9.2" height="1.0" fill="#2c2e2a"/><rect x="511.7" y="264.6" width="8.8" height="2.9" fill="#3c3e39"/><path d="M511.7 264.2 L513.2 260.6 L514.7 264.2 Z" fill="#111"/><path d="M517.5 260.8 L519.0 264.2 L520.5 260.8 Z" fill="#111"/><rect x="505.0" y="258.8" width="1.6" height="8.4" fill="#3e3f3b"/><text x="537.1" y="245.2" font-family="Liberation Sans" font-weight="700" font-size="4.2" fill="#e8e8e8" text-anchor="middle">21▲▼22</text><rect x="527.5" y="246.2" width="19.1" height="11.4" fill="#8e8e8e" stroke="#a5a5a5" stroke-width="0.6"/><circle cx="537.1" cy="251.9" r="2.6" fill="#b3a7a6"/><rect x="527.5" y="268.5" width="19.1" height="12.5" fill="#8e8e8e" stroke="#a5a5a5" stroke-width="0.6"/><circle cx="537.1" cy="274.8" r="2.6" fill="#b3a7a6"/><rect x="526.8" y="258.0" width="20.6" height="10.2" fill="#bdc0b6"/><rect x="532.5" y="257.9" width="9.2" height="1.1" fill="#f0f0ea"/><rect x="532.5" y="259.0" width="9.2" height="1.0" fill="#2c2e2a"/><rect x="532.7" y="264.6" width="8.8" height="2.9" fill="#3c3e39"/><path d="M532.7 264.2 L534.2 260.6 L535.7 264.2 Z" fill="#111"/><path d="M538.5 260.8 L540.0 264.2 L541.5 260.8 Z" fill="#111"/><rect x="526.1" y="258.8" width="1.6" height="8.4" fill="#3e3f3b"/><text x="558.1" y="245.2" font-family="Liberation Sans" font-weight="700" font-size="4.2" fill="#e8e8e8" text-anchor="middle">23▲▼24</text><rect x="548.5" y="246.2" width="19.1" height="11.4" fill="#8e8e8e" stroke="#a5a5a5" stroke-width="0.6"/><circle cx="558.1" cy="251.9" r="2.6" fill="#b3a7a6"/><rect x="548.5" y="268.5" width="19.1" height="12.5" fill="#8e8e8e" stroke="#a5a5a5" stroke-width="0.6"/><circle cx="558.1" cy="274.8" r="2.6" fill="#b3a7a6"/><rect x="547.8" y="258.0" width="20.6" height="10.2" fill="#bdc0b6"/><rect x="553.5" y="257.9" width="9.2" height="1.1" fill="#f0f0ea"/><rect x="553.5" y="259.0" width="9.2" height="1.0" fill="#2c2e2a"/><rect x="553.7" y="264.6" width="8.8" height="2.9" fill="#3c3e39"/><path d="M553.7 264.2 L555.2 260.6 L556.7 264.2 Z" fill="#111"/><path d="M559.5 260.8 L561.0 264.2 L562.5 260.8 Z" fill="#111"/><rect x="547.1" y="258.8" width="1.6" height="8.4" fill="#3e3f3b"/><text x="579.2" y="245.2" font-family="Liberation Sans" font-weight="700" font-size="4.2" fill="#e8e8e8" text-anchor="middle">25▲▼26</text><rect x="569.6" y="246.2" width="19.1" height="11.4" fill="#8e8e8e" stroke="#a5a5a5" stroke-width="0.6"/><circle cx="579.2" cy="251.9" r="2.6" fill="#b3a7a6"/><rect x="569.6" y="268.5" width="19.1" height="12.5" fill="#8e8e8e" stroke="#a5a5a5" stroke-width="0.6"/><circle cx="579.2" cy="274.8" r="2.6" fill="#b3a7a6"/><rect x="568.9" y="258.0" width="20.6" height="10.2" fill="#bdc0b6"/><rect x="574.6" y="257.9" width="9.2" height="1.1" fill="#f0f0ea"/><rect x="574.6" y="259.0" width="9.2" height="1.0" fill="#2c2e2a"/><rect x="574.8" y="264.6" width="8.8" height="2.9" fill="#3c3e39"/><path d="M574.8 264.2 L576.3 260.6 L577.8 264.2 Z" fill="#111"/><path d="M580.6 260.8 L582.1 264.2 L583.6 260.8 Z" fill="#111"/><rect x="568.2" y="258.8" width="1.6" height="8.4" fill="#3e3f3b"/><text x="600.2" y="245.2" font-family="Liberation Sans" font-weight="700" font-size="4.2" fill="#e8e8e8" text-anchor="middle">27▲▼28</text><rect x="590.6" y="246.2" width="19.1" height="11.4" fill="#8e8e8e" stroke="#a5a5a5" stroke-width="0.6"/><circle cx="600.2" cy="251.9" r="2.6" fill="#b3a7a6"/><rect x="590.6" y="268.5" width="19.1" height="12.5" fill="#8e8e8e" stroke="#a5a5a5" stroke-width="0.6"/><circle cx="600.2" cy="274.8" r="2.6" fill="#b3a7a6"/><rect x="589.9" y="258.0" width="20.6" height="10.2" fill="#bdc0b6"/><rect x="595.6" y="257.9" width="9.2" height="1.1" fill="#f0f0ea"/><rect x="595.6" y="259.0" width="9.2" height="1.0" fill="#2c2e2a"/><rect x="595.8" y="264.6" width="8.8" height="2.9" fill="#3c3e39"/><path d="M595.8 264.2 L597.3 260.6 L598.8 264.2 Z" fill="#111"/><path d="M601.6 260.8 L603.1 264.2 L604.6 260.8 Z" fill="#111"/><rect x="589.2" y="258.8" width="1.6" height="8.4" fill="#3e3f3b"/><text x="621.3" y="245.2" font-family="Liberation Sans" font-weight="700" font-size="4.2" fill="#e8e8e8" text-anchor="middle">29▲▼30</text><rect x="611.6" y="246.2" width="19.1" height="11.4" fill="#8e8e8e" stroke="#a5a5a5" stroke-width="0.6"/><circle cx="621.3" cy="251.9" r="2.6" fill="#b3a7a6"/><rect x="611.6" y="268.5" width="19.1" height="12.5" fill="#8e8e8e" stroke="#a5a5a5" stroke-width="0.6"/><circle cx="621.3" cy="274.8" r="2.6" fill="#b3a7a6"/><rect x="610.9" y="258.0" width="20.6" height="10.2" fill="#bdc0b6"/><rect x="616.7" y="257.9" width="9.2" height="1.1" fill="#f0f0ea"/><rect x="616.7" y="259.0" width="9.2" height="1.0" fill="#2c2e2a"/><rect x="616.9" y="264.6" width="8.8" height="2.9" fill="#3c3e39"/><path d="M616.9 264.2 L618.4 260.6 L619.9 264.2 Z" fill="#111"/><path d="M622.7 260.8 L624.2 264.2 L625.7 260.8 Z" fill="#111"/><rect x="610.2" y="258.8" width="1.6" height="8.4" fill="#3e3f3b"/><text x="642.3" y="245.2" font-family="Liberation Sans" font-weight="700" font-size="4.2" fill="#e8e8e8" text-anchor="middle">31▲▼32</text><rect x="632.7" y="246.2" width="19.1" height="11.4" fill="#8e8e8e" stroke="#a5a5a5" stroke-width="0.6"/><circle cx="642.3" cy="251.9" r="2.6" fill="#b3a7a6"/><rect x="632.7" y="268.5" width="19.1" height="12.5" fill="#8e8e8e" stroke="#a5a5a5" stroke-width="0.6"/><circle cx="642.3" cy="274.8" r="2.6" fill="#b3a7a6"/><rect x="632.0" y="258.0" width="20.6" height="10.2" fill="#bdc0b6"/><rect x="637.7" y="257.9" width="9.2" height="1.1" fill="#f0f0ea"/><rect x="637.7" y="259.0" width="9.2" height="1.0" fill="#2c2e2a"/><rect x="637.9" y="264.6" width="8.8" height="2.9" fill="#3c3e39"/><path d="M637.9 264.2 L639.4 260.6 L640.9 264.2 Z" fill="#111"/><path d="M643.7 260.8 L645.2 264.2 L646.7 260.8 Z" fill="#111"/><rect x="631.3" y="258.8" width="1.6" height="8.4" fill="#3e3f3b"/><rect x="657.5" y="245.3" width="161.0" height="36.4" fill="#0c0c0c" stroke="#6f6f6f" stroke-width="0.6"/><text x="667.6" y="245.2" font-family="Liberation Sans" font-weight="700" font-size="4.2" fill="#e8e8e8" text-anchor="middle">33▲▼34</text><rect x="657.8" y="246.2" width="19.2" height="11.4" fill="#8f8f8f" stroke="#6a6a6a" stroke-width="0.5"/><circle cx="667.6" cy="251.9" r="2.6" fill="#b3a7a6"/><rect x="657.8" y="268.5" width="19.2" height="12.5" fill="#8f8f8f" stroke="#6a6a6a" stroke-width="0.5"/><circle cx="667.6" cy="274.8" r="2.6" fill="#b3a7a6"/><rect x="657.7" y="258.0" width="19.7" height="10.2" fill="#bdc0b6"/><rect x="663.0" y="257.9" width="9.2" height="1.1" fill="#f0f0ea"/><rect x="663.0" y="259.0" width="9.2" height="1.0" fill="#2c2e2a"/><rect x="663.2" y="264.6" width="8.8" height="2.9" fill="#3c3e39"/><path d="M663.2 264.2 L664.7 260.6 L666.2 264.2 Z" fill="#111"/><path d="M669.0 260.8 L670.5 264.2 L672.0 260.8 Z" fill="#111"/><rect x="657.0" y="258.8" width="1.6" height="8.4" fill="#3e3f3b"/><text x="687.7" y="245.2" font-family="Liberation Sans" font-weight="700" font-size="4.2" fill="#e8e8e8" text-anchor="middle">35▲▼36</text><rect x="677.9" y="246.2" width="19.2" height="11.4" fill="#8f8f8f" stroke="#6a6a6a" stroke-width="0.5"/><circle cx="687.7" cy="251.9" r="2.6" fill="#b3a7a6"/><rect x="677.9" y="268.5" width="19.2" height="12.5" fill="#8f8f8f" stroke="#6a6a6a" stroke-width="0.5"/><circle cx="687.7" cy="274.8" r="2.6" fill="#b3a7a6"/><rect x="677.8" y="258.0" width="19.7" height="10.2" fill="#bdc0b6"/><rect x="683.1" y="257.9" width="9.2" height="1.1" fill="#f0f0ea"/><rect x="683.1" y="259.0" width="9.2" height="1.0" fill="#2c2e2a"/><rect x="683.3" y="264.6" width="8.8" height="2.9" fill="#3c3e39"/><path d="M683.3 264.2 L684.8 260.6 L686.3 264.2 Z" fill="#111"/><path d="M689.1 260.8 L690.6 264.2 L692.1 260.8 Z" fill="#111"/><rect x="677.1" y="258.8" width="1.6" height="8.4" fill="#3e3f3b"/><text x="707.8" y="245.2" font-family="Liberation Sans" font-weight="700" font-size="4.2" fill="#e8e8e8" text-anchor="middle">37▲▼38</text><rect x="698.0" y="246.2" width="19.2" height="11.4" fill="#8f8f8f" stroke="#6a6a6a" stroke-width="0.5"/><circle cx="707.8" cy="251.9" r="2.6" fill="#b3a7a6"/><rect x="698.0" y="268.5" width="19.2" height="12.5" fill="#8f8f8f" stroke="#6a6a6a" stroke-width="0.5"/><circle cx="707.8" cy="274.8" r="2.6" fill="#b3a7a6"/><rect x="697.9" y="258.0" width="19.7" height="10.2" fill="#bdc0b6"/><rect x="703.2" y="257.9" width="9.2" height="1.1" fill="#f0f0ea"/><rect x="703.2" y="259.0" width="9.2" height="1.0" fill="#2c2e2a"/><rect x="703.4" y="264.6" width="8.8" height="2.9" fill="#3c3e39"/><path d="M703.4 264.2 L704.9 260.6 L706.4 264.2 Z" fill="#111"/><path d="M709.2 260.8 L710.7 264.2 L712.2 260.8 Z" fill="#111"/><rect x="697.2" y="258.8" width="1.6" height="8.4" fill="#3e3f3b"/><text x="727.9" y="245.2" font-family="Liberation Sans" font-weight="700" font-size="4.2" fill="#e8e8e8" text-anchor="middle">39▲▼40</text><rect x="718.2" y="246.2" width="19.2" height="11.4" fill="#8f8f8f" stroke="#6a6a6a" stroke-width="0.5"/><circle cx="727.9" cy="251.9" r="2.6" fill="#b3a7a6"/><rect x="718.2" y="268.5" width="19.2" height="12.5" fill="#8f8f8f" stroke="#6a6a6a" stroke-width="0.5"/><circle cx="727.9" cy="274.8" r="2.6" fill="#b3a7a6"/><rect x="718.1" y="258.0" width="19.7" height="10.2" fill="#bdc0b6"/><rect x="723.3" y="257.9" width="9.2" height="1.1" fill="#f0f0ea"/><rect x="723.3" y="259.0" width="9.2" height="1.0" fill="#2c2e2a"/><rect x="723.5" y="264.6" width="8.8" height="2.9" fill="#3c3e39"/><path d="M723.5 264.2 L725.0 260.6 L726.5 264.2 Z" fill="#111"/><path d="M729.3 260.8 L730.8 264.2 L732.3 260.8 Z" fill="#111"/><rect x="717.4" y="258.8" width="1.6" height="8.4" fill="#3e3f3b"/><text x="748.0" y="245.2" font-family="Liberation Sans" font-weight="700" font-size="4.2" fill="#e8e8e8" text-anchor="middle">41▲▼42</text><rect x="738.3" y="246.2" width="19.2" height="11.4" fill="#8f8f8f" stroke="#6a6a6a" stroke-width="0.5"/><circle cx="748.0" cy="251.9" r="2.6" fill="#b3a7a6"/><rect x="738.3" y="268.5" width="19.2" height="12.5" fill="#8f8f8f" stroke="#6a6a6a" stroke-width="0.5"/><circle cx="748.0" cy="274.8" r="2.6" fill="#b3a7a6"/><rect x="738.2" y="258.0" width="19.7" height="10.2" fill="#bdc0b6"/><rect x="743.4" y="257.9" width="9.2" height="1.1" fill="#f0f0ea"/><rect x="743.4" y="259.0" width="9.2" height="1.0" fill="#2c2e2a"/><rect x="743.6" y="264.6" width="8.8" height="2.9" fill="#3c3e39"/><path d="M743.6 264.2 L745.1 260.6 L746.6 264.2 Z" fill="#111"/><path d="M749.4 260.8 L750.9 264.2 L752.4 260.8 Z" fill="#111"/><rect x="737.5" y="258.8" width="1.6" height="8.4" fill="#3e3f3b"/><text x="768.2" y="245.2" font-family="Liberation Sans" font-weight="700" font-size="4.2" fill="#e8e8e8" text-anchor="middle">43▲▼44</text><rect x="758.4" y="246.2" width="19.2" height="11.4" fill="#8f8f8f" stroke="#6a6a6a" stroke-width="0.5"/><circle cx="768.2" cy="251.9" r="2.6" fill="#b3a7a6"/><rect x="758.4" y="268.5" width="19.2" height="12.5" fill="#8f8f8f" stroke="#6a6a6a" stroke-width="0.5"/><circle cx="768.2" cy="274.8" r="2.6" fill="#b3a7a6"/><rect x="758.3" y="258.0" width="19.7" height="10.2" fill="#bdc0b6"/><rect x="763.6" y="257.9" width="9.2" height="1.1" fill="#f0f0ea"/><rect x="763.6" y="259.0" width="9.2" height="1.0" fill="#2c2e2a"/><rect x="763.8" y="264.6" width="8.8" height="2.9" fill="#3c3e39"/><path d="M763.8 264.2 L765.3 260.6 L766.8 264.2 Z" fill="#111"/><path d="M769.6 260.8 L771.1 264.2 L772.6 260.8 Z" fill="#111"/><rect x="757.6" y="258.8" width="1.6" height="8.4" fill="#3e3f3b"/><text x="788.3" y="245.2" font-family="Liberation Sans" font-weight="700" font-size="4.2" fill="#e8e8e8" text-anchor="middle">45▲▼46</text><rect x="778.5" y="246.2" width="19.2" height="11.4" fill="#8f8f8f" stroke="#6a6a6a" stroke-width="0.5"/><circle cx="788.3" cy="251.9" r="2.6" fill="#b3a7a6"/><rect x="778.5" y="268.5" width="19.2" height="12.5" fill="#8f8f8f" stroke="#6a6a6a" stroke-width="0.5"/><circle cx="788.3" cy="274.8" r="2.6" fill="#b3a7a6"/><rect x="778.4" y="258.0" width="19.7" height="10.2" fill="#bdc0b6"/><rect x="783.7" y="257.9" width="9.2" height="1.1" fill="#f0f0ea"/><rect x="783.7" y="259.0" width="9.2" height="1.0" fill="#2c2e2a"/><rect x="783.9" y="264.6" width="8.8" height="2.9" fill="#3c3e39"/><path d="M783.9 264.2 L785.4 260.6 L786.9 264.2 Z" fill="#111"/><path d="M789.7 260.8 L791.2 264.2 L792.7 260.8 Z" fill="#111"/><rect x="777.7" y="258.8" width="1.6" height="8.4" fill="#3e3f3b"/><text x="808.4" y="245.2" font-family="Liberation Sans" font-weight="700" font-size="4.2" fill="#e8e8e8" text-anchor="middle">47▲▼48</text><rect x="798.6" y="246.2" width="19.2" height="11.4" fill="#8f8f8f" stroke="#6a6a6a" stroke-width="0.5"/><circle cx="808.4" cy="251.9" r="2.6" fill="#b3a7a6"/><rect x="798.6" y="268.5" width="19.2" height="12.5" fill="#8f8f8f" stroke="#6a6a6a" stroke-width="0.5"/><circle cx="808.4" cy="274.8" r="2.6" fill="#b3a7a6"/><rect x="798.5" y="258.0" width="19.7" height="10.2" fill="#bdc0b6"/><rect x="803.8" y="257.9" width="9.2" height="1.1" fill="#f0f0ea"/><rect x="803.8" y="259.0" width="9.2" height="1.0" fill="#2c2e2a"/><rect x="804.0" y="264.6" width="8.8" height="2.9" fill="#3c3e39"/><path d="M804.0 264.2 L805.5 260.6 L807.0 264.2 Z" fill="#111"/><path d="M809.8 260.8 L811.3 264.2 L812.8 260.8 Z" fill="#111"/><rect x="797.8" y="258.8" width="1.6" height="8.4" fill="#3e3f3b"/><text x="837.0" y="245.0" font-family="Liberation Sans" font-weight="700" font-size="4.2" fill="#e8e8e8" text-anchor="middle">49▲ ▼50</text><rect x="824.6" y="246.6" width="25.1" height="11.6" fill="#0a0a0a" stroke="#1f7f8c" stroke-width="1.3"/><rect x="824.6" y="269.2" width="25.1" height="11.6" fill="#0a0a0a" stroke="#1f7f8c" stroke-width="1.3"/><rect x="823.8" y="258.9" width="26.7" height="9.4" fill="#d9d9d4"/><circle cx="837.1" cy="252.4" r="2.7" fill="#c2aaa0"/><circle cx="837.1" cy="275.0" r="2.7" fill="#c2aaa0"/><path d="M826.6 264.6 L828.1 261.6 L829.6 264.6 Z" fill="#222"/><path d="M844.7 261.6 L846.2 264.6 L847.7 261.6 Z" fill="#222"/><rect x="831.6" y="262.2" width="2.2" height="1.8" fill="#2a2a2a"/><rect x="834.5" y="262.2" width="2.2" height="1.8" fill="#2a2a2a"/><rect x="837.4" y="262.2" width="2.2" height="1.8" fill="#2a2a2a"/><rect x="840.3" y="262.2" width="2.2" height="1.8" fill="#2a2a2a"/><rect x="829.5" y="284.9" width="1.8" height="1.8" fill="#050505"/><rect x="843.0" y="284.9" width="1.8" height="1.8" fill="#050505"/><rect x="851.8" y="247" width="1.6" height="2.2" fill="#0a0a0a"/><rect x="851.8" y="252" width="1.6" height="2.2" fill="#0a0a0a"/><rect x="851.8" y="257" width="1.6" height="2.2" fill="#0a0a0a"/><rect x="851.8" y="262" width="1.6" height="2.2" fill="#0a0a0a"/><rect x="851.8" y="267" width="1.6" height="2.2" fill="#0a0a0a"/><rect x="851.8" y="272" width="1.6" height="2.2" fill="#0a0a0a"/><rect x="851.8" y="277" width="1.6" height="2.2" fill="#0a0a0a"/><text x="870.0" y="245.0" font-family="Liberation Sans" font-weight="700" font-size="4.2" fill="#e8e8e8" text-anchor="middle">51▲ ▼52</text><rect x="857.6" y="246.6" width="25.1" height="11.6" fill="#0a0a0a" stroke="#1f7f8c" stroke-width="1.3"/><rect x="857.6" y="269.2" width="25.1" height="11.6" fill="#0a0a0a" stroke="#1f7f8c" stroke-width="1.3"/><rect x="856.8" y="258.9" width="26.7" height="9.4" fill="#d9d9d4"/><circle cx="870.1" cy="252.4" r="2.7" fill="#c2aaa0"/><circle cx="870.1" cy="275.0" r="2.7" fill="#c2aaa0"/><path d="M859.6 264.6 L861.1 261.6 L862.6 264.6 Z" fill="#222"/><path d="M877.7 261.6 L879.2 264.6 L880.7 261.6 Z" fill="#222"/><rect x="864.6" y="262.2" width="2.2" height="1.8" fill="#2a2a2a"/><rect x="867.5" y="262.2" width="2.2" height="1.8" fill="#2a2a2a"/><rect x="870.4" y="262.2" width="2.2" height="1.8" fill="#2a2a2a"/><rect x="873.3" y="262.2" width="2.2" height="1.8" fill="#2a2a2a"/><rect x="862.5" y="284.9" width="1.8" height="1.8" fill="#050505"/><rect x="876.0" y="284.9" width="1.8" height="1.8" fill="#050505"/><rect x="884.8" y="247" width="1.6" height="2.2" fill="#0a0a0a"/><rect x="884.8" y="252" width="1.6" height="2.2" fill="#0a0a0a"/><rect x="884.8" y="257" width="1.6" height="2.2" fill="#0a0a0a"/><rect x="884.8" y="262" width="1.6" height="2.2" fill="#0a0a0a"/><rect x="884.8" y="267" width="1.6" height="2.2" fill="#0a0a0a"/><rect x="884.8" y="272" width="1.6" height="2.2" fill="#0a0a0a"/><rect x="884.8" y="277" width="1.6" height="2.2" fill="#0a0a0a"/><text x="903.0" y="245.0" font-family="Liberation Sans" font-weight="700" font-size="4.2" fill="#e8e8e8" text-anchor="middle">53▲ ▼54</text><rect x="890.6" y="246.6" width="25.1" height="11.6" fill="#0a0a0a" stroke="#1f7f8c" stroke-width="1.3"/><rect x="890.6" y="269.2" width="25.1" height="11.6" fill="#0a0a0a" stroke="#1f7f8c" stroke-width="1.3"/><rect x="889.8" y="258.9" width="26.7" height="9.4" fill="#d9d9d4"/><circle cx="903.1" cy="252.4" r="2.7" fill="#c2aaa0"/><circle cx="903.1" cy="275.0" r="2.7" fill="#c2aaa0"/><path d="M892.6 264.6 L894.1 261.6 L895.6 264.6 Z" fill="#222"/><path d="M910.7 261.6 L912.2 264.6 L913.7 261.6 Z" fill="#222"/><rect x="897.6" y="262.2" width="2.2" height="1.8" fill="#2a2a2a"/><rect x="900.5" y="262.2" width="2.2" height="1.8" fill="#2a2a2a"/><rect x="903.4" y="262.2" width="2.2" height="1.8" fill="#2a2a2a"/><rect x="906.3" y="262.2" width="2.2" height="1.8" fill="#2a2a2a"/><rect x="895.5" y="284.9" width="1.8" height="1.8" fill="#050505"/><rect x="909.0" y="284.9" width="1.8" height="1.8" fill="#050505"/></svg><svg class="r" style="left:740px;top:300px" width="190" height="30" viewBox="740 300 190 30"><circle cx="750" cy="308.7" r="4" fill="#1f7fe0"/><circle cx="784" cy="308.7" r="4" fill="#a89284"/><rect x="832" y="303.5" width="1" height="9" fill="#9a9da2"/><rect x="846.5" y="307" width="7.8" height="4" fill="none" stroke="#1d7c8a" stroke-width="1.6"/></svg><div class="t" style="left:757.70px;top:305.18px;font-size:7.7px;line-height:7.7px;font-weight:400;color:#e3e4e5;">FC</div><div class="t" style="left:791.70px;top:304.97px;font-size:7.95px;line-height:7.95px;font-weight:400;color:#e3e4e5;letter-spacing:0.05px">Ethernet</div><div class="t" style="left:858.50px;top:304.97px;font-size:7.95px;line-height:7.95px;font-weight:400;color:#e3e4e5;">Breakout Capable</div><div class="r" style="left:296px;top:315px;width:626px;height:10px;background:#eeeeee"></div><svg class="r" style="left:296px;top:315px" width="626" height="10" viewBox="0 0 626 10"><path d="M7 3.3 L4.8 5 L7 6.7 Z" fill="#9a9a9a"/><path d="M619 3.3 L621.2 5 L619 6.7 Z" fill="#8a8a8a"/></svg>
</body></html>
